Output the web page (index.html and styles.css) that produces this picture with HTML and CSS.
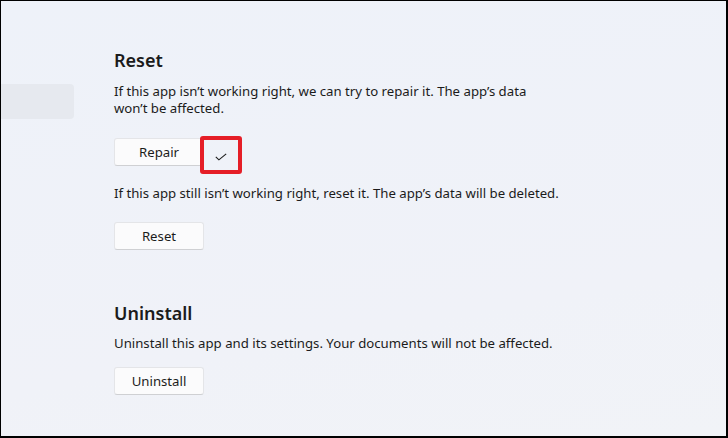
FILE: index.html
```html
<!DOCTYPE html>
<html lang="en">
<head>
  <meta charset="UTF-8">
  <title>Apps - Advanced options</title>
  <link rel="stylesheet" href="styles.css">
</head>
<body>
  <div class="window">
    <aside class="nav">
      <div class="nav-item"></div>
    </aside>
    <main class="content">
      <section class="group">
        <h2 class="title">Reset</h2>
        <p class="desc">If this app isn’t working right, we can try to repair it. The app’s data<br>won’t be affected.</p>
        <div class="action-row">
          <button class="btn">Repair</button>
          <span class="mark">
            <svg width="12" height="8" viewBox="0 0 12 8"><path d="M0.8 3.8 L3.9 6.8 L11.2 0.8" fill="none" stroke="#1b1b1b" stroke-width="1.1"/></svg>
          </span>
        </div>
        <p class="desc desc-second">If this app still isn’t working right, reset it. The app’s data will be deleted.</p>
        <button class="btn">Reset</button>
      </section>
      <section class="group group-uninstall">
        <h2 class="title">Uninstall</h2>
        <p class="desc desc-last">Uninstall this app and its settings. Your documents will not be affected.</p>
        <button class="btn btn-last">Uninstall</button>
      </section>
    </main>
  </div>
</body>
</html>
```

FILE: styles.css
```css
* {
  margin: 0;
  padding: 0;
  box-sizing: border-box;
}
body {
  font-family: "Noto Sans", "Open Sans", sans-serif;
  color: #1b1b1b;
  background: #000;
}
.window {
  width: 728px;
  height: 438px;
  display: flex;
  border: 1px solid #000;
  border-right-width: 2px;
  border-bottom-width: 2px;
  background: linear-gradient(170deg, #eef2f9 0%, #f0f2f8 70%, #f1f3f7 100%);
  overflow: hidden;
}
.nav {
  width: 73px;
  flex: none;
  padding-top: 83px;
}
.nav-item {
  height: 35px;
  background: #e6e9ef;
  border-radius: 0 4px 4px 0;
}
.content {
  padding-left: 40px;
  padding-top: 47px;
}
.title {
  font-size: 18px;
  line-height: 24px;
  font-weight: 600;
}
.desc {
  font-size: 13.2px;
  line-height: 17px;
  margin-top: 11px;
}
.action-row {
  position: relative;
  margin-top: 21px;
  height: 28px;
}
.btn {
  display: block;
  width: 90px;
  height: 28px;
  font-family: inherit;
  font-size: 13.2px;
  color: #1b1b1b;
  background: #fbfbfc;
  border: 1px solid #e4e5e8;
  border-bottom-color: #cfd0d3;
  border-radius: 3px;
}
.mark {
  position: absolute;
  left: 86px;
  top: -2px;
  width: 42px;
  height: 38px;
  display: flex;
  align-items: center;
  justify-content: center;
  border: 4px solid #e51e27;
  border-radius: 3px;
  padding-top: 4px;
}
.desc-second {
  margin-top: 19px;
}
.desc-second + .btn {
  margin-top: 20px;
}
.group-uninstall {
  margin-top: 51px;
}
.desc-last {
  margin-top: 10px;
}
.btn-last {
  margin-top: 15px;
}
```
